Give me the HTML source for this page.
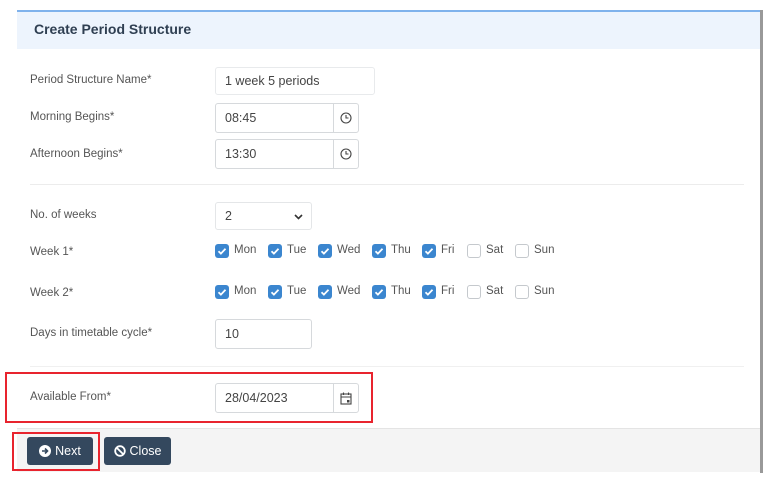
<!DOCTYPE html>
<html><head><style>
*{box-sizing:border-box;margin:0;padding:0}
body{width:768px;height:504px;background:#fff;font-family:"Liberation Sans",sans-serif;position:relative;overflow:hidden}
.a{position:absolute}
.lbl{position:absolute;left:30px;font-size:11.5px;color:#555}
.inp{position:absolute;left:215px;border:1px solid #d6d9dc;border-radius:3px;background:#fff;font-size:12.5px;color:#444;padding-left:9px;display:flex;align-items:center}
.add{position:absolute;right:0;top:0;bottom:0;width:25px;border-left:1px solid #d6d9dc;display:flex;align-items:center;justify-content:center}
.cb{position:absolute;width:14px;height:14px;border-radius:3px;background:#3b86cf}
.cb.off{background:#fff;border:1px solid #c5c9cd}
.cl{position:absolute;font-size:11.5px;color:#555}
.btn{position:absolute;top:437px;height:28px;background:#34485e;border-radius:3px;color:#fff;font-size:12.5px;display:flex;align-items:center;justify-content:center;gap:4px}
</style></head><body>
<div class="a" style="left:17px;top:10px;width:743px;height:462px;background:#fff"></div>
<div class="a" style="left:17px;top:10px;width:743px;height:2px;background:#7fb2ec"></div>
<div class="a" style="left:17px;top:12px;width:743px;height:37px;background:#edf4fd"></div>
<div class="a" style="left:34px;top:21px;font-size:14px;font-weight:bold;color:#2f3f52">Create Period Structure</div>
<div class="a" style="left:760px;top:10px;width:3px;height:463px;background:#999"></div>

<div class="lbl" style="top:74px">Period Structure Name*</div>
<div class="inp" style="top:67px;width:160px;height:28px;border-color:#e8eaec">1 week 5 periods</div>
<div class="lbl" style="top:111px">Morning Begins*</div>
<div class="inp" style="top:103px;width:144px;height:30px">08:45<div class="add"><svg width="12" height="12" viewBox="0 0 12 12"><circle cx="6" cy="6" r="5" fill="none" stroke="#444" stroke-width="1.1"/><path d="M6 3v3h2.5" fill="none" stroke="#444" stroke-width="1.1"/></svg></div></div>
<div class="lbl" style="top:148px">Afternoon Begins*</div>
<div class="inp" style="top:139px;width:144px;height:30px">13:30<div class="add"><svg width="12" height="12" viewBox="0 0 12 12"><circle cx="6" cy="6" r="5" fill="none" stroke="#444" stroke-width="1.1"/><path d="M6 3v3h2.5" fill="none" stroke="#444" stroke-width="1.1"/></svg></div></div>

<div class="a" style="left:30px;top:184px;width:714px;height:1px;background:#ececec"></div>

<div class="lbl" style="top:209px">No. of weeks</div>
<div class="inp" style="top:202px;width:97px;height:28px;border-color:#e4e6e8">2<svg class="a" style="right:8px;top:11px" width="9" height="6" viewBox="0 0 9 6"><path d="M1 1l3.5 3.5L8 1" fill="none" stroke="#333" stroke-width="1.6"/></svg></div>

<div class="lbl" style="top:246px">Week 1*</div>
<div class="lbl" style="top:287px">Week 2*</div>
<div id="w"></div>

<div class="lbl" style="top:327px">Days in timetable cycle*</div>
<div class="inp" style="top:319px;width:97px;height:30px">10</div>

<div class="a" style="left:30px;top:366px;width:714px;height:1px;background:#f0f0f0"></div>

<div class="lbl" style="top:391px">Available From*</div>
<div class="inp" style="top:383px;width:144px;height:30px">28/04/2023<div class="add"><svg width="12" height="13" viewBox="0 0 12 13"><rect x="1" y="2" width="10" height="10" fill="none" stroke="#444" stroke-width="1.1"/><path d="M1 5h10M3.5 0.5v2.5M8.5 0.5v2.5" stroke="#444" stroke-width="1.1"/><rect x="7" y="8" width="2.5" height="2.5" fill="#444"/></svg></div></div>
<div class="a" style="left:5px;top:372px;width:368px;height:51px;border:2px solid #e8242e"></div>

<div class="a" style="left:17px;top:428px;width:743px;height:44px;background:#f4f4f4;border-top:1px solid #e4e4e4"></div>
<div class="btn" style="left:27px;width:66px"><svg width="12" height="12" viewBox="0 0 12 12"><circle cx="6" cy="6" r="6" fill="#fff"/><path d="M3 6h5M6 3.5L8.5 6 6 8.5" fill="none" stroke="#34485e" stroke-width="1.6"/></svg>Next</div>
<div class="btn" style="left:104px;width:67px"><svg width="12" height="12" viewBox="0 0 12 12"><circle cx="6" cy="6" r="4.8" fill="none" stroke="#fff" stroke-width="1.8"/><path d="M2.7 2.7l6.6 6.6" stroke="#fff" stroke-width="1.8"/></svg>Close</div>
<div class="a" style="left:12px;top:432px;width:88px;height:39px;border:2px solid #e8242e"></div>

<script>
var xs=[215,268,318,372,422,467,515],ns=["Mon","Tue","Wed","Thu","Fri","Sat","Sun"],h="";
[244,285].forEach(function(y){xs.forEach(function(x,i){var on=i<5;h+='<div class="cb'+(on?'':' off')+'" style="left:'+x+'px;top:'+y+'px">'+(on?'<svg width="14" height="14" viewBox="0 0 14 14"><path d="M3.5 7.2l2.4 2.4 4.6-4.8" fill="none" stroke="#fff" stroke-width="1.8"/></svg>':'')+'</div><div class="cl" style="left:'+(x+19)+'px;top:'+(y+0)+'px">'+ns[i]+'</div>';});});
document.getElementById('w').innerHTML=h;
</script>
</body></html>
